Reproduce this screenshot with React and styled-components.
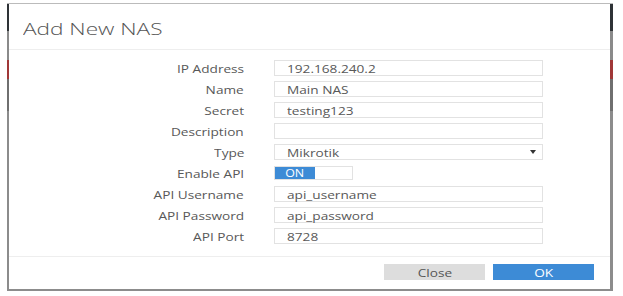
import React from "react";
import styled, { createGlobalStyle } from "styled-components";

const Global = createGlobalStyle`
  html, body { margin: 0; padding: 0; background: #fff; }
  body { font-family: "Open Sans", "Liberation Sans", sans-serif; }
  * { box-sizing: border-box; }
`;

const Frame = styled.div`
  margin: 3px 0 0 7px;
  width: 606px;
  height: 288px;
  padding: 1px 3px 2px 2px;
  background:
    linear-gradient(to bottom, #bbb 0, #bbb 1px, transparent 1px),
    linear-gradient(to bottom, #2e3236 0px, #2e3236 28px, #8a8a8a 28px, #8a8a8a 57px, #a03838 57px, #a03838 76px, #6f6f6f 76px, #6f6f6f 108px, #8c8c8c 108px);
  display: flex;
`;

const Modal = styled.div`
  flex: 1;
  background: #fff;
  display: flex;
  flex-direction: column;
`;

const Header = styled.div`
  height: 46px;
  display: flex;
  align-items: center;
  padding: 4px 0 0 14px;
  border-bottom: 1px solid #eeeeee;
`;

const Stretch = styled.span`
  display: inline-block;
  transform: scaleX(${(p) => p.$k || 1.24});
  transform-origin: ${(p) => p.$origin || "left"} center;
  white-space: nowrap;
`;

const Title = styled.h1`
  margin: 0;
  font-size: 17px;
  font-weight: 300;
  color: #555;
`;

const Body = styled.div`
  flex: 1;
  padding: 10px 0 0 0;
  display: flex;
  flex-direction: column;
  gap: 5px;
  border-bottom: 1px solid #eeeeee;
`;

const Row = styled.div`
  display: grid;
  grid-template-columns: 235px 269px;
  column-gap: 30px;
  align-items: center;
  height: 16px;
`;

const Label = styled.label`
  text-align: right;
  font-size: 11px;
  color: #585858;
`;

const Input = styled.div`
  height: 16px;
  border: 1px solid #e2e2e2;
  padding: 0 12px;
  display: flex;
  align-items: center;
  justify-content: space-between;
  font-size: 11px;
  color: #585858;
`;

const Caret = styled.span`
  width: 0;
  height: 0;
  border-left: 3.5px solid transparent;
  border-right: 3.5px solid transparent;
  border-top: 4px solid #333;
  margin-right: -6px;
`;

const Toggle = styled.div`
  width: 79px;
  height: 14px;
  border: 1px solid #e2e2e2;
  display: flex;
`;

const ToggleOn = styled.div`
  width: 40px;
  height: 100%;
  background: #3d8bd6;
  color: #fff;
  font-size: 10px;
  display: flex;
  align-items: center;
  justify-content: center;
`;

const Footer = styled.div`
  height: 32px;
  display: flex;
  justify-content: flex-end;
  align-items: flex-start;
  padding: 7px 16px 0 0;
  gap: 8px;
`;

const Button = styled.button`
  width: 101px;
  height: 16px;
  border: none;
  padding: 0;
  font-family: inherit;
  font-size: 11px;
  background: ${(p) => (p.$primary ? "#3d8bd6" : "#dddddd")};
  color: ${(p) => (p.$primary ? "#fff" : "#555")};
`;

const fields = [
  ["IP Address", "192.168.240.2"],
  ["Name", "Main NAS"],
  ["Secret", "testing123"],
  ["Description", ""],
  ["Type", "Mikrotik", "select"],
  ["Enable API", "", "toggle"],
  ["API Username", "api_username"],
  ["API Password", "api_password"],
  ["API Port", "8728"],
];

export default function App() {
  return (
    <>
      <Global />
      <Frame>
        <Modal>
          <Header>
            <Title>
              <Stretch $k={1.33}>Add New NAS</Stretch>
            </Title>
          </Header>
          <Body>
            {fields.map(([label, value, kind]) => (
              <Row key={label}>
                <Label>
                  <Stretch $origin="right">{label}</Stretch>
                </Label>
                {kind === "toggle" ? (
                  <Toggle>
                    <ToggleOn>
                      <Stretch $origin="center">ON</Stretch>
                    </ToggleOn>
                  </Toggle>
                ) : (
                  <Input>
                    <Stretch>{value}</Stretch>
                    {kind === "select" && <Caret />}
                  </Input>
                )}
              </Row>
            ))}
          </Body>
          <Footer>
            <Button>
              <Stretch $origin="center">Close</Stretch>
            </Button>
            <Button $primary>
              <Stretch $origin="center">OK</Stretch>
            </Button>
          </Footer>
        </Modal>
      </Frame>
    </>
  );
}
